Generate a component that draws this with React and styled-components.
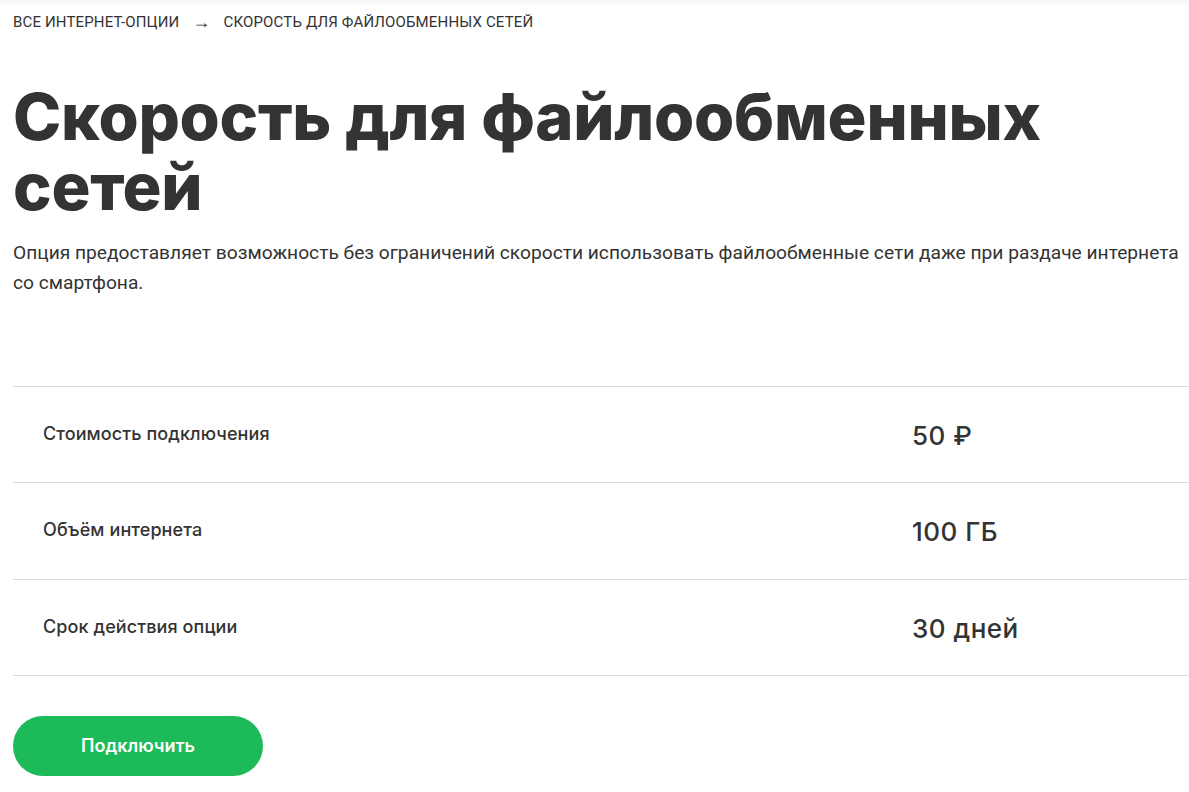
import React from "react";
import styled, { createGlobalStyle } from "styled-components";

const Global = createGlobalStyle`
  html, body { margin: 0; padding: 0; background: #fff; }
  body { font-family: Roboto, "Noto Sans", sans-serif; color: #333; }
`;

const Page = styled.div`
  position: relative;
  padding: 0 0 0 13px;
  min-height: 792px;
  box-sizing: border-box;
  &::before {
    content: "";
    position: absolute;
    left: 0; right: 0; top: 0;
    height: 8px;
    background: linear-gradient(to bottom, rgba(0,0,0,0.035), rgba(0,0,0,0));
  }
`;

const Breadcrumbs = styled.nav`
  display: flex;
  align-items: center;
  gap: 12px;
  padding-top: 12px;
  height: 20px;
  font-family: Roboto, sans-serif;
  font-size: 15px;
  line-height: 20px;
  letter-spacing: 0.15px;
  text-transform: uppercase;
  color: #333;
`;

const Crumb = styled.span``;

const Arrow = styled.span`
  font-size: 18px;
  padding: 0 1px;
`;

const Title = styled.h1`
  margin: 50px 0 0;
  font-family: Inter, sans-serif;
  font-weight: 800;
  font-size: 65px;
  line-height: 70px;
  letter-spacing: -0.25px;
  color: #333;
  max-width: 1100px;
`;

const Description = styled.p`
  margin: 16px 0 0;
  font-family: Roboto, sans-serif;
  font-size: 19.2px;
  line-height: 30px;
  color: #333;
`;

const Table = styled.div`
  margin-top: 88px;
  border-top: 1px solid #d9d9d9;
`;

const Row = styled.div`
  display: grid;
  grid-template-columns: 869px 1fr;
  align-items: center;
  height: 95.3px;
  padding-left: 30px;
  border-bottom: 1px solid #d9d9d9;
`;

const Label = styled.div`
  font-family: Inter, sans-serif;
  font-weight: 500;
  font-size: 18px;
  letter-spacing: 0.1px;
  color: #333;
  margin-top: -2px;
`;

const Value = styled.div`
  font-family: Inter, sans-serif;
  font-weight: 500;
  font-size: 26px;
  letter-spacing: 0.5px;
  color: #333;
  margin-top: 2px;
`;

const Button = styled.button`
  margin-top: 40px;
  width: 250px;
  height: 60px;
  border: none;
  border-radius: 30px;
  background: #1dba5a;
  color: #fff;
  font-family: Inter, sans-serif;
  font-weight: 600;
  font-size: 18px;
  cursor: pointer;
`;

const rows = [
  ["Стоимость подключения", "50 ₽"],
  ["Объём интернета", "100 ГБ"],
  ["Срок действия опции", "30 дней"],
];

export default function App() {
  return (
    <Page>
      <Global />
      <Breadcrumbs>
        <Crumb>Все интернет-опции</Crumb>
        <Arrow>→</Arrow>
        <Crumb>Скорость для файлообменных сетей</Crumb>
      </Breadcrumbs>
      <Title>Скорость для файлообменных сетей</Title>
      <Description>
        Опция предоставляет возможность без ограничений скорости использовать файлообменные сети даже при раздаче интернета со смартфона.
      </Description>
      <Table>
        {rows.map(([l, v]) => (
          <Row key={l}>
            <Label>{l}</Label>
            <Value>{v}</Value>
          </Row>
        ))}
      </Table>
      <Button>Подключить</Button>
    </Page>
  );
}
